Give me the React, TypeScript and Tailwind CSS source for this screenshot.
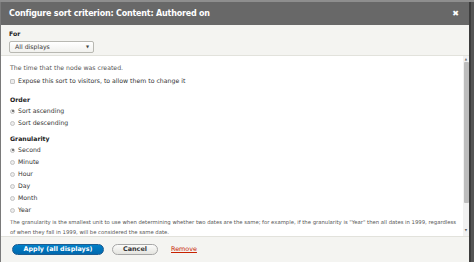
import type { ReactNode } from "react";

function Radio({ checked, children }: { checked?: boolean; children: ReactNode }) {
  return (
    <div className="flex h-[12px] items-center gap-[3px]">
      <span className="flex h-[5px] w-[5px] items-center justify-center rounded-full border border-[#c4c4c4] bg-[#ececec]">
        {checked && <span className="h-[2px] w-[2px] rounded-full bg-[#555]" />}
      </span>
      <span>{children}</span>
    </div>
  );
}

export default function App() {
  const granularity = ["Second", "Minute", "Hour", "Day", "Month", "Year"];

  return (
    <div className="flex h-[262px] w-[474px] flex-col overflow-hidden border-t-2 border-[#8e8e8e] bg-[#555] font-['DejaVu_Sans',sans-serif] text-[6.2px] text-[#333]">
      <div className="flex h-[260px] w-[471px] flex-col border-l border-r-2 border-l-[#7a7a7a] border-r-[#3c3c3c] bg-white">
        {/* title bar */}
        <div className="flex h-[23px] shrink-0 items-center justify-between bg-[#686868] pl-[8px] pr-[10px]">
          <span className="text-[8px] font-bold tracking-[-0.2px] text-white">
            Configure sort criterion: Content: Authored on
          </span>
          <span className="text-[8px] font-bold leading-none text-white">✖</span>
        </div>

        {/* display selector */}
        <div className="h-[31px] shrink-0 border-b border-[#e2e2dc] bg-[#f4f4f1] px-[8px] pt-[4px]">
          <div className="h-[10px] font-bold leading-[10px] text-[#222]">For</div>
          <div className="mt-[2px] flex h-[12px] w-[85px] items-center justify-between rounded-[2px] border border-[#b8b8b2] bg-gradient-to-b from-white to-[#f1f1ee] pl-[5px] pr-[4px]">
            <span>All displays</span>
            <span className="text-[4px] text-[#444]">▼</span>
          </div>
        </div>

        {/* scrolling content */}
        <div className="flex h-[180px] shrink-0 overflow-hidden">
          <div className="flex-1 overflow-hidden pl-[9px] pt-[6px]">
            <div className="flex h-[12px] items-center text-[#555]">The time that the node was created.</div>
            <div className="mt-[1px] flex h-[12px] items-center gap-[3px]">
              <span className="h-[5px] w-[5px] rounded-[1px] border border-[#c4c4c4] bg-[#ececec]" />
              <span>Expose this sort to visitors, to allow them to change it</span>
            </div>

            <div className="mt-[8px] flex h-[10px] items-center font-bold text-[#222]">Order</div>
            <Radio checked>Sort ascending</Radio>
            <Radio>Sort descending</Radio>

            <div className="mt-[5px] flex h-[10px] items-center font-bold text-[#222]">Granularity</div>
            {granularity.map((g, i) => (
              <Radio key={g} checked={i === 0}>
                {g}
              </Radio>
            ))}
            <p className="mt-[1px] pr-[4px] text-[5.3px] leading-[10px] text-[#555]">
              The granularity is the smallest unit to use when determining whether two dates are the same; for example, if the
              granularity is "Year" then all dates in 1999, regardless of when they fall in 1999, will be considered the same date.
            </p>
          </div>
          <div className="flex w-[6px] flex-col items-center bg-[#f1f1f1]">
            <span className="mt-[1px] text-[3px] leading-[4px] text-[#666]">▲</span>
            <div className="mt-[1px] h-[141px] w-[5px] rounded-[1px] bg-[#bdbdbd]" />
            <div className="flex-1" />
            <span className="mb-[4px] text-[3px] leading-[4px] text-[#666]">▼</span>
          </div>
        </div>

        {/* actions */}
        <div className="flex flex-1 items-center border-t border-[#e2e2dc] bg-[#f4f4f1] pl-[11px]">
          <button className="flex h-[11px] w-[92px] items-center justify-center rounded-full border border-[#1e5c90] bg-gradient-to-b from-[#0080c8] to-[#0068ae] text-[6.4px] font-bold text-white">
            Apply (all displays)
          </button>
          <button className="ml-[8px] flex h-[11px] w-[46px] items-center justify-center rounded-full border border-[#a6a6a6] bg-gradient-to-b from-[#fbfbfa] to-[#e4e4df] text-[6.4px] font-bold text-[#333]">
            Cancel
          </button>
          <a className="ml-[13px] text-[6.4px] text-[#c72100] underline">Remove</a>
        </div>
      </div>
    </div>
  );
}
